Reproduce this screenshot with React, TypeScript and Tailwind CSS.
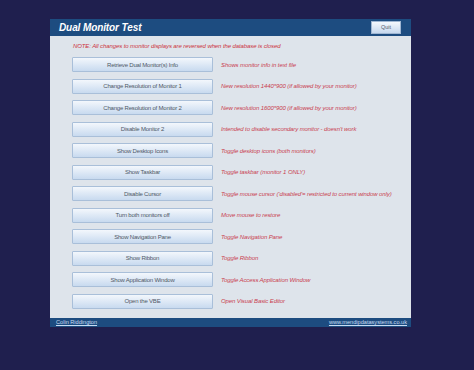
import React from 'react';

const rows: [string, string][] = [
  ['Retrieve Dual Monitor(s) Info', 'Shows monitor info in text file'],
  ['Change Resolution of Monitor 1', 'New resolution 1440*900 (if allowed by your monitor)'],
  ['Change Resolution of Monitor 2', 'New resolution 1600*900 (if allowed by your monitor)'],
  ['Disable Monitor 2', "Intended to disable secondary monitor - doesn't work"],
  ['Show Desktop Icons', 'Toggle desktop icons (both monitors)'],
  ['Show Taskbar', 'Toggle taskbar (monitor 1 ONLY)'],
  ['Disable Cursor', "Toggle mouse cursor ('disabled'= restricted to current window only)"],
  ['Turn both monitors off', 'Move mouse to restore'],
  ['Show Navigation Pane', 'Toggle Navigation Pane'],
  ['Show Ribbon', 'Toggle Ribbon'],
  ['Show Application Window', 'Toggle Access Application Window'],
  ['Open the VBE', 'Open Visual Basic Editor'],
];

export default function App() {
  return (
    <div className="w-[474px] h-[370px] bg-[#1f1f4e] pt-[19px] pl-[50px] font-['Liberation_Sans',sans-serif]">
      <div className="w-[361px]">
        {/* Header */}
        <div className="h-[17px] bg-[#1d4c80] flex items-center justify-between pl-[9px] pr-[10px]">
          <span className="text-white font-bold italic text-[10px] tracking-[-0.1px] leading-none">Dual Monitor Test</span>
          <button className="w-[30px] h-[13px] bg-gradient-to-b from-[#f4f8fd] to-[#c6d8ee] border border-[#9fb6d2] text-[#555d6b] text-[5.5px] leading-none">
            Quit
          </button>
        </div>

        {/* Body */}
        <div className="h-[282px] bg-[#dee4eb] pl-[22px] pt-[6px]">
          <p className="text-[#cc3340] italic text-[6px] tracking-[-0.1px] leading-[8px] ml-[1px]">
            NOTE: All changes to monitor displays are reversed when the database is closed
          </p>
          <div className="mt-[7px] flex flex-col gap-[6.5px]">
            {rows.map(([label, desc]) => (
              <div key={label} className="flex items-center">
                <button className="w-[141px] h-[15px] flex-shrink-0 bg-gradient-to-b from-[#f3f7fc] to-[#c8daef] border border-[#a9bfd9] rounded-[1px] text-[#4f5866] text-[6px] tracking-[-0.2px] leading-none">
                  {label}
                </button>
                <span className="ml-[8px] text-[#c9404f] italic text-[6px] tracking-[-0.1px] leading-none whitespace-nowrap">
                  {desc}
                </span>
              </div>
            ))}
          </div>
        </div>

        {/* Footer */}
        <div className="h-[9px] bg-[#1d4c80] flex items-center justify-between pl-[6px] pr-[4px]">
          <span className="text-[#c9dcf3] underline text-[5.6px] leading-none">Colin Riddington</span>
          <span className="text-[#c9dcf3] underline text-[5.6px] leading-none">www.mendipdatasystems.co.uk</span>
        </div>
      </div>
    </div>
  );
}
